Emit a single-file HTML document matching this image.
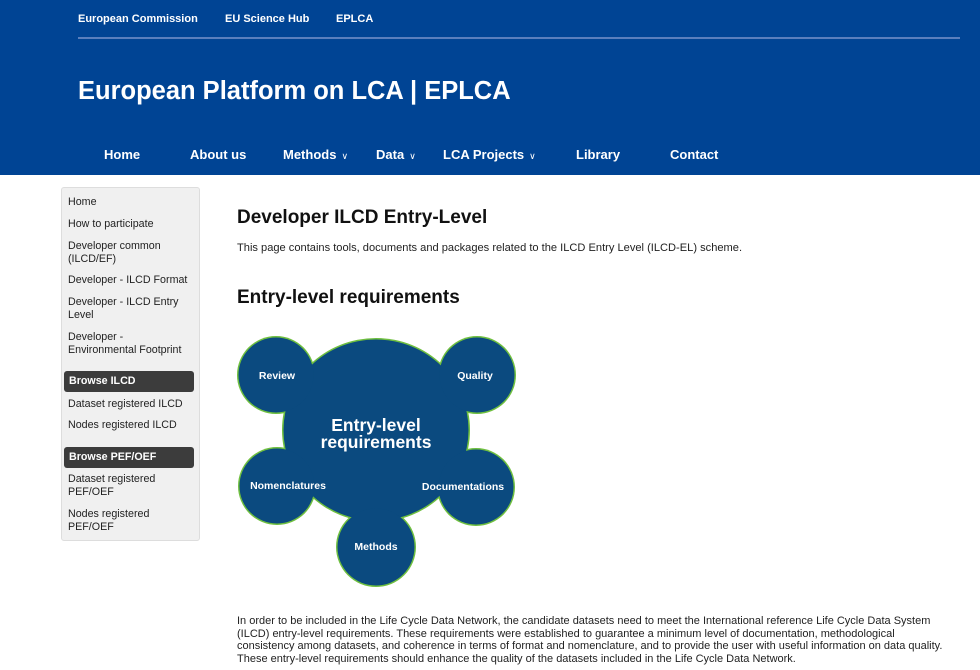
<!DOCTYPE html>
<html><head><meta charset="utf-8"><style>
*{margin:0;padding:0;box-sizing:border-box}
body{width:980px;height:670px;overflow:hidden;background:#fff;font-family:"Liberation Sans",Arial,sans-serif;position:relative;color:#222}
.a{position:absolute;white-space:nowrap}
#hd{position:absolute;left:0;top:0;width:980px;height:175px;background:#004494;color:#fff}
.tl{font-size:11px;font-weight:bold;top:13px}
.nv{font-size:13px;font-weight:bold;top:147px}
.nv small{font-size:9px;font-weight:normal;margin-left:5px}
#sb{position:absolute;left:61px;top:187px;width:139px;height:354px;background:#f0f0f0;border:1px solid #ddd;border-radius:3px}
.s{position:absolute;left:68px;font-size:10.7px;line-height:13px;color:#222}
.bb{position:absolute;left:64px;width:130px;height:21px;background:#3c3c3c;border-radius:3px;color:#fff;font-size:10.7px;font-weight:bold;padding:4px 0 0 5px}
</style></head><body>
<div id="hd">
<div class="a tl" style="left:78px">European Commission</div>
<div class="a tl" style="left:225px">EU Science Hub</div>
<div class="a tl" style="left:336px">EPLCA</div>
<div class="a" style="left:78px;top:37px;width:882px;height:2px;background:#5a7fbd"></div>
<div class="a" style="left:78px;top:77px;font-size:25.5px;font-weight:bold">European Platform on LCA | EPLCA</div>
<div class="a nv" style="left:104px">Home</div>
<div class="a nv" style="left:190px">About us</div>
<div class="a nv" style="left:283px">Methods<small>∨</small></div>
<div class="a nv" style="left:376px">Data<small>∨</small></div>
<div class="a nv" style="left:443px">LCA Projects<small>∨</small></div>
<div class="a nv" style="left:576px">Library</div>
<div class="a nv" style="left:670px">Contact</div>
</div>
<div id="sb"></div>
<div class="s" style="top:196px">Home</div>
<div class="s" style="top:218px">How to participate</div>
<div class="s" style="top:240px">Developer common<br>(ILCD/EF)</div>
<div class="s" style="top:274px">Developer - ILCD Format</div>
<div class="s" style="top:296px">Developer - ILCD Entry<br>Level</div>
<div class="s" style="top:331px">Developer -<br>Environmental Footprint</div>
<div class="bb" style="top:371px">Browse ILCD</div>
<div class="s" style="top:398px">Dataset registered ILCD</div>
<div class="s" style="top:419px">Nodes registered ILCD</div>
<div class="bb" style="top:447px">Browse PEF/OEF</div>
<div class="s" style="top:473px">Dataset registered<br>PEF/OEF</div>
<div class="s" style="top:508px">Nodes registered<br>PEF/OEF</div>

<div class="a" style="left:237px;top:207px;font-size:19px;font-weight:bold;color:#111">Developer ILCD Entry-Level</div>
<div class="a" style="left:237px;top:242px;font-size:11.1px">This page contains tools, documents and packages related to the ILCD Entry Level (ILCD-EL) scheme.</div>
<div class="a" style="left:237px;top:287px;font-size:19px;font-weight:bold;color:#111">Entry-level requirements</div>

<svg class="a" style="left:0;top:0" width="980" height="670">
<g fill="#6fbf3f">
<ellipse cx="376" cy="430" rx="94" ry="92"/>
<circle cx="276" cy="375" r="39"/><circle cx="477" cy="375" r="39"/>
<circle cx="277" cy="486" r="39"/><circle cx="476" cy="487" r="39"/>
<circle cx="376" cy="547" r="40"/>
</g>
<g fill="#0b4a7f">
<ellipse cx="376" cy="430" rx="92.5" ry="90.5"/>
<circle cx="276" cy="375" r="37.5"/><circle cx="477" cy="375" r="37.5"/>
<circle cx="277" cy="486" r="37.5"/><circle cx="476" cy="487" r="37.5"/>
<circle cx="376" cy="547" r="38.5"/>
</g>
<g fill="#fff" font-family="Liberation Sans,Arial,sans-serif" font-weight="bold" font-size="10.5" text-anchor="middle">
<text x="277" y="379">Review</text><text x="475" y="379">Quality</text>
<text x="288" y="489">Nomenclatures</text><text x="463" y="490">Documentations</text>
<text x="376" y="550">Methods</text>
<text x="376" y="431" font-size="17.5">Entry-level</text>
<text x="376" y="448" font-size="17.5">requirements</text>
</g>
</svg>

<div class="a" style="left:237px;top:615px;font-size:11px;line-height:12.7px;white-space:normal;width:716px">In order to be included in the Life Cycle Data Network, the candidate datasets need to meet the International reference Life Cycle Data System (ILCD) entry-level requirements. These requirements were established to guarantee a minimum level of documentation, methodological consistency among datasets, and coherence in terms of format and nomenclature, and to provide the user with useful information on data quality. These entry-level requirements should enhance the quality of the datasets included in the Life Cycle Data Network.</div>
</body></html>
